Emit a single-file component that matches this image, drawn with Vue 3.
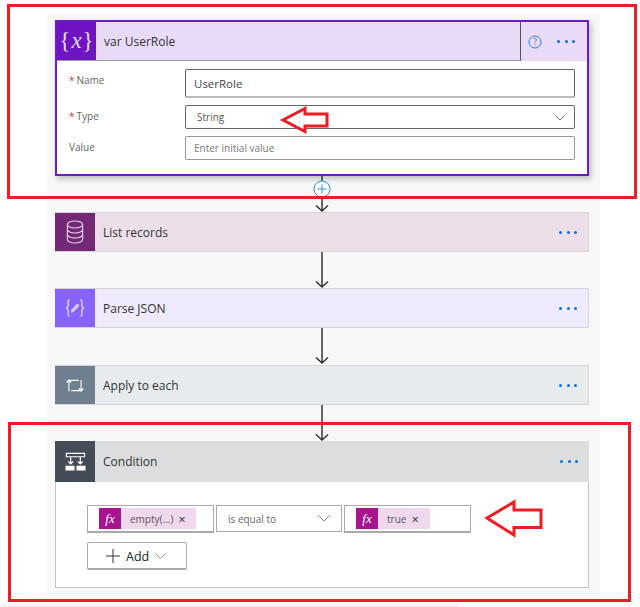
<template>
  <div class="page">
    <div class="canvas">
      <section class="card var-card">
        <header class="var-head">
          <div class="head-main">
            <span class="tile tile-var"><span class="var-glyph">{<i>x</i>}</span></span>
            <span class="title">var UserRole</span>
          </div>
          <div class="head-tools">
            <svg class="help" width="14" height="14" viewBox="0 0 14 14">
              <circle cx="7" cy="7" r="6" fill="none" stroke="#2f7ee0" />
              <text x="7" y="10.2" text-anchor="middle" font-size="9" fill="#2f7ee0" font-family="Open Sans">?</text>
            </svg>
            <span class="dots"><b></b><b></b><b></b></span>
          </div>
        </header>
        <div class="var-form">
          <label class="req">Name</label>
          <div class="input name-input">UserRole</div>
          <label class="req">Type</label>
          <div class="input type-input">
            <span>String</span>
            <svg width="12" height="7" viewBox="0 0 12 7"><path d="M.5.5 6 6 11.500.5" fill="none" stroke="#777" /></svg>
          </div>
          <label>Value</label>
          <div class="input value-input">Enter initial value</div>
        </div>
      </section>

      <div class="link">
        <svg width="20" height="36" viewBox="0 0 20 36">
          <path d="M10 0V35M4 29.500 10 35 16 29.500" fill="none" stroke="#333" stroke-width="1.500" />
          <circle cx="10" cy="13" r="8" fill="#fff" stroke="#2f8fdc" />
          <path d="M10 8.500V17.500M5.500 13H14.500" stroke="#2f8fdc" />
        </svg>
      </div>

      <template v-for="step in steps" :key="step.name">
        <section class="card step" :class="step.cls">
          <span class="tile">
            <svg v-if="step.cls === 'list'" width="18" height="24" viewBox="0 0 20 24" preserveAspectRatio="none" fill="none" stroke="#e8d6ec" stroke-width="1.200">
              <ellipse cx="10" cy="4.500" rx="8.500" ry="3.500" />
              <path d="M1.500 4.500V19.500C1.500 21.500 5.500 23 10 23S18.500 21.500 18.500 19.500V4.500M1.500 9.500C1.500 11.500 5.500 13 10 13S18.500 11.500 18.500 9.500M1.500 14.500C1.500 16.500 5.500 18 10 18S18.500 16.500 18.500 14.500" />
            </svg>
            <svg v-else-if="step.cls === 'parse'" width="20" height="18" viewBox="0 0 22 20" fill="none" stroke="#f1ecff" stroke-width="1.200">
              <path d="M5 1C2.500 1 3.500 4 3.500 6.500S3 9.500 1 10C3 10.500 3.500 11 3.500 13.500S2.500 19 5 19M17 1C19.500 1 18.500 4 18.500 6.500S19 9.500 21 10C19 10.500 18.500 11 18.500 13.500S19.500 19 17 19" />
              <path d="M13.500 5.500 15.500 7.500 9.500 14 7 14.800 7.500 12Z" fill="#cfc0ff" stroke-width=".8" />
            </svg>
            <svg v-else width="20" height="15" viewBox="0 0 20 16" fill="none" stroke="#fff" stroke-width="1.200">
              <path d="M3.500 14V2.500H14M1 5 3.500 2 6 5M16.500 2V13.500H6M14 11 16.500 14 19 11" />
            </svg>
          </span>
          <span class="title">{{ step.name }}</span>
          <span class="dots"><b></b><b></b><b></b></span>
        </section>
        <div class="link">
          <svg width="20" height="36" viewBox="0 0 20 36">
            <path d="M10 0V35M4 29.500 10 35 16 29.500" fill="none" stroke="#333" stroke-width="1.500" />
          </svg>
        </div>
      </template>

      <section class="card cond">
        <header class="cond-head">
          <span class="tile tile-cond">
            <svg width="21" height="20" viewBox="0 0 22 20" fill="none" stroke="#fff" stroke-width="1.200">
              <path d="M1.500 1H20.500V4.500H1.500ZM6 4.500V11M16 4.500V11M3.500 9.500 6 12 8.500 9.500M13.500 9.500 16 12 18.500 9.500" />
              <path d="M.5 14H10V19H.5ZM12 14H21.500V19H12Z" fill="#fff" stroke="none" />
            </svg>
          </span>
          <span class="title">Condition</span>
          <span class="dots"><b></b><b></b><b></b></span>
        </header>
        <div class="cond-body">
          <div class="cond-row">
            <div class="token-box left-box">
              <span class="fx">f<i>x</i></span>
              <span class="chip">empty(...)<em>×</em></span>
            </div>
            <div class="op-select">
              <span>is equal to</span>
              <svg width="12" height="7" viewBox="0 0 12 7"><path d="M.5.5 6 6 11.500.5" fill="none" stroke="#888" /></svg>
            </div>
            <div class="token-box right-box">
              <span class="fx">f<i>x</i></span>
              <span class="chip">true<em>×</em></span>
            </div>
          </div>
          <button class="add-btn">
            <svg width="14" height="14" viewBox="0 0 14 14"><path d="M7 0V14M0 7H14" stroke="#333" /></svg>
            <span class="add-text">Add</span>
            <svg width="11" height="6" viewBox="0 0 11 6"><path d="M.5.5 5.500 5.500 10.500.5" fill="none" stroke="#999" /></svg>
          </button>
        </div>
      </section>
    </div>

    <!-- red annotations drawn on top of the screenshot -->
    <div class="mark mark-top"></div>
    <div class="mark mark-bottom"></div>
    <svg class="arrows" width="640" height="607" viewBox="0 0 640 607" fill="#fff" stroke="#ee1c25" stroke-width="3">
      <path d="M283 120 305 108.500V114H327V126H305V131.500Z" />
      <path d="M487 518 514 502V510H541V527.500H514V535Z" />
    </svg>
    <div class="foot-line"></div>
  </div>
</template>

<script setup>
const steps = [
  { name: 'List records', cls: 'list' },
  { name: 'Parse JSON', cls: 'parse' },
  { name: 'Apply to each', cls: 'apply' }
]
</script>

<style>
body {
  background: #fff;
}
</style>

<style scoped>
.page {
  position: relative;
  width: 640px;
  height: 607px;
  overflow: hidden;
  font-family: "Open Sans", "Noto Sans", sans-serif;
  font-size: 12px;
  color: #333;
}

.canvas {
  display: flex;
  flex-direction: column;
  box-sizing: border-box;
  width: 553px;
  height: 587px;
  margin: 0 0 0 47px;
  position: relative;
  top: 13px;
  padding: 7px 11px 0 8px;
  background: #f8f8f8;
}

.card {
  box-sizing: border-box;
  width: 534px;
  background: #fff;
  flex: none;
}

.link {
  display: flex;
  justify-content: center;
  height: 36px;
  flex: none;
  margin-left: -1px;
}

.tile {
  display: flex;
  align-items: center;
  justify-content: center;
  width: 40px;
  flex: none;
  align-self: stretch;
}

.title {
  margin-left: 8px;
  flex: 1;
}

.dots {
  display: flex;
  gap: 4.500px;
  margin-right: 11px;
}

.dots b {
  width: 3px;
  height: 3px;
  border-radius: 50%;
  background: #0b72cf;
}

/* variable card */
.var-card {
  height: 156px;
  border: 2px solid #6a1bc8;
  box-shadow: 2px 3px 6px rgba(0, 0, 0, 0.25);
}

.var-head {
  display: flex;
  height: 39px;
  background: #e9dbf8;
}

.head-main {
  display: flex;
  align-items: center;
  width: 464px;
  box-sizing: border-box;
  border-right: 1px solid #555;
  border-bottom: 1px solid #999;
}

.tile-var {
  background: #6f14c4;
  width: 39px;
}

.var-glyph {
  font-family: "Liberation Serif", serif;
  font-size: 23px;
  color: #e6dcf5;
}

.var-glyph i {
  margin: 0 1px;
}

.head-tools {
  display: flex;
  flex: 1;
  align-items: center;
  justify-content: space-between;
  padding-left: 7px;
}

.head-tools .dots {
  margin-right: 12px;
}

.var-form {
  display: grid;
  grid-template-columns: 116px 390px;
  grid-template-rows: 29px 24px 24px;
  row-gap: 7px;
  padding: 8px 0 0 12px;
  color: #666;
}

.var-form label {
  font-size: 10px;
  line-height: 16px;
  padding-top: 3px;
}

.req::before {
  content: "*";
  color: #d9403a;
  margin-right: 2px;
}

.input {
  display: flex;
  align-items: center;
  box-sizing: border-box;
  border: 1px solid #888;
  border-radius: 2px;
  background: #fff;
  padding-left: 8px;
  font-size: 10px;
}

.name-input {
  border-color: #666;
  border-bottom: 2px solid #bbb;
  font-size: 11.500px;
  color: #444;
}

.type-input {
  justify-content: space-between;
  border-color: #666;
  padding: 0 8px 0 11px;
  color: #555;
}

.value-input {
  border-color: #999;
  color: #777;
}

/* collapsed steps */
.step {
  display: flex;
  align-items: center;
  height: 40px;
  border: 1px solid #d4d4d8;
  border-left: 0;
}

.list {
  background: #ecdfea;
}

.list .tile {
  background: #742774;
}

.parse {
  background: #efeafd;
}

.parse .tile {
  background: #8763fb;
}

.apply {
  margin-top: 1px;
  background: #e8ebee;
}

.apply .tile {
  background: #6f7f90;
}

/* condition */
.cond {
  height: 147px;
  border: 1px solid #c4c4c4;
  border-top: 0;
}

.cond-head {
  display: flex;
  align-items: center;
  height: 41px;
  margin: 0 -1px;
  background: #dcdddf;
}

.tile-cond {
  background: #444c58;
}

.cond-body {
  padding: 23px 0 0 31px;
}

.cond-row {
  display: flex;
  gap: 2px;
  align-items: flex-start;
}

.token-box {
  display: flex;
  align-items: center;
  box-sizing: border-box;
  width: 127px;
  height: 28px;
  padding-left: 11px;
  border: 1px solid #aaa;
  border-bottom-width: 2px;
}

.fx {
  display: flex;
  align-items: center;
  justify-content: center;
  width: 22px;
  height: 21px;
  background: #a6158f;
  color: #fff;
  font-family: "Liberation Serif", serif;
  font-style: italic;
  font-size: 13px;
}

.chip {
  display: flex;
  align-items: center;
  box-sizing: border-box;
  height: 21px;
  padding-left: 9px;
  background: #f0d8ef;
  font-size: 10px;
  color: #555;
}

.chip em {
  font-style: normal;
  font-size: 13px;
  margin-left: 5px;
  color: #333;
}

.left-box .chip {
  width: 75px;
}

.right-box .chip {
  width: 52px;
}

.op-select {
  display: flex;
  align-items: center;
  justify-content: space-between;
  box-sizing: border-box;
  width: 126px;
  height: 27px;
  padding: 0 11px;
  border: 1px solid #aaa;
  font-size: 10px;
  color: #666;
}

.add-btn {
  display: flex;
  align-items: center;
  box-sizing: border-box;
  width: 100px;
  height: 28px;
  margin-top: 9px;
  padding: 0 0 0 18px;
  gap: 6px;
  background: #fff;
  border: 1px solid #aaa;
  border-bottom-width: 2px;
  border-radius: 2px;
  font-family: inherit;
  font-size: 12.500px;
  font-weight: 500;
  color: #222;
}

.add-text {
  padding-top: 2px;
}

/* annotations */
.mark {
  position: absolute;
  box-sizing: border-box;
  border: 3px solid #ee1c25;
}

.mark-top {
  left: 7px;
  top: 4px;
  width: 630px;
  height: 195px;
}

.mark-bottom {
  left: 8px;
  top: 422px;
  width: 623px;
  height: 180px;
}

.arrows {
  position: absolute;
  left: 0;
  top: 0;
  pointer-events: none;
}

.foot-line {
  position: absolute;
  left: 0;
  bottom: 0;
  width: 458px;
  height: 2px;
  background: #f1f1f1;
}
</style>
